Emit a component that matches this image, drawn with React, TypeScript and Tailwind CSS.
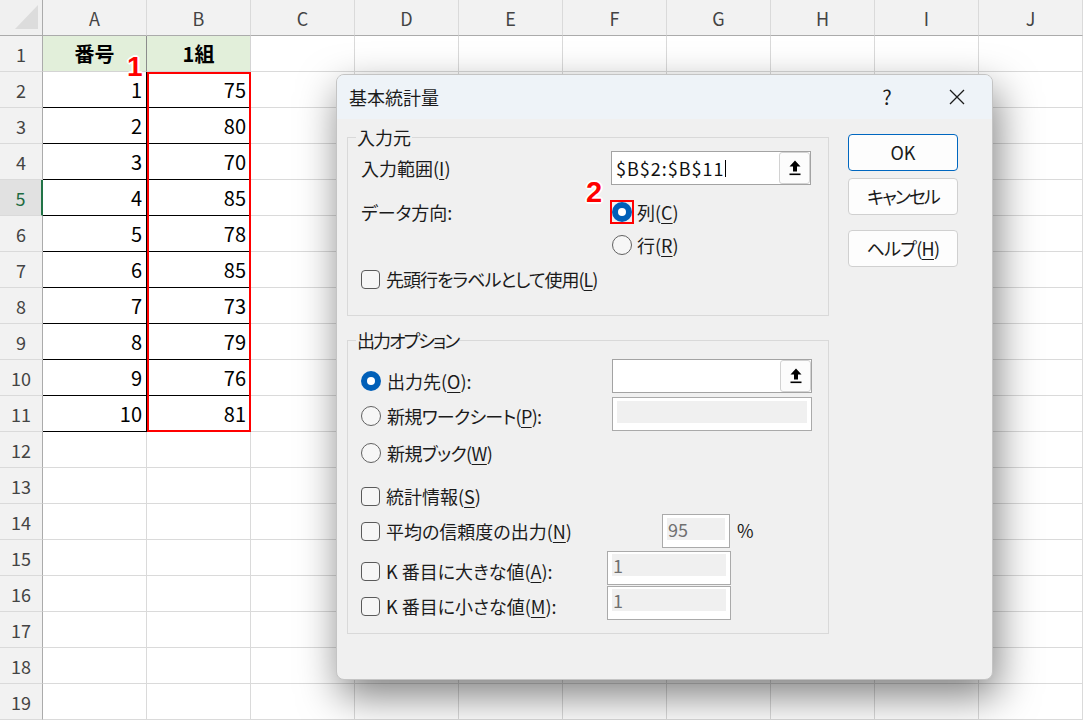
import React from "react";

const COLS = ["A", "B", "C", "D", "E", "F", "G", "H", "I", "J"];
const SCORES = [75, 80, 70, 85, 78, 85, 73, 79, 76, 81];
const ROWS = Array.from({ length: 19 }, (_, i) => i + 1);

function Acc({ pre, k, post }: { pre: string; k: string; post?: string }) {
  return (
    <span>
      {pre}(<span className="underline underline-offset-[3px] decoration-1">{k}</span>){post}
    </span>
  );
}

function UpArrow() {
  return (
    <svg width="12" height="16" viewBox="0 0 12 16">
      <path d="M6 0.5 L11.5 6.5 L8 6.5 L8 11.5 L4 11.5 L4 6.5 L0.5 6.5 Z" fill="#000" />
      <rect x="0.5" y="13.5" width="11" height="1.6" fill="#000" />
    </svg>
  );
}

function RefBox({ value, caret }: { value?: string; caret?: boolean }) {
  return (
    <div className="w-[200px] h-[34px] border border-[#a3a3a3] bg-white flex shrink-0">
      <div className="flex-1 flex items-center pl-[4px] text-[18px] tracking-[1px] text-[#111] leading-none">
        {value}
        {caret && <span className="w-px h-[17px] bg-black ml-[0px]" />}
      </div>
      <div className="w-[31px] h-[32px] border border-[#d2d2d2] rounded-[3px] bg-[#fcfcfc] flex items-center justify-center">
        <UpArrow />
      </div>
    </div>
  );
}

function GreyBox({ width, value, top }: { width: string; value?: string; top: string }) {
  return (
    <div className={`${width} h-[34px] border border-[#aaaaaa] bg-white px-[4px] shrink-0`}>
      <div className={`${top} h-[22px] bg-[#f0f0f0] flex items-center pl-[1px] text-[18px] text-[#707070] leading-none`}>
        {value}
      </div>
    </div>
  );
}

function Radio({ checked, marked }: { checked?: boolean; marked?: boolean }) {
  return (
    <span className="relative w-[20px] h-[20px] shrink-0">
      {checked ? (
        <span className="w-[20px] h-[20px] rounded-full bg-[#005fb8] flex items-center justify-center">
          <span className="w-[8px] h-[8px] rounded-full bg-white" />
        </span>
      ) : (
        <span className="block w-[20px] h-[20px] rounded-full border border-[#616161] bg-[#f6f6f6]" />
      )}
      {marked && <span className="absolute -inset-[2px] border-2 border-[#ff0000]" />}
    </span>
  );
}

function Check() {
  return <span className="w-[19px] h-[19px] rounded-[4px] border border-[#5a5a5a] bg-[#f6f6f6] shrink-0" />;
}

function StatsDialog() {
  return (
    <div className="absolute left-[336px] top-[74px] w-[657px] h-[606px] rounded-[8px] border border-[#c4c4c4] bg-[#f0f0f0] overflow-hidden shadow-[4px_16px_40px_rgba(0,0,0,0.5)] text-[18px] text-[#1b1b1b] [font-feature-settings:'palt'] font-['Noto_Sans_CJK_JP','Noto_Sans',sans-serif]">
      {/* title bar */}
      <div className="h-[44px] bg-[#eef3f8] flex items-center pl-[12px]">
        <span className="flex-1 leading-none">基本統計量</span>
        <span className="w-[46px] flex justify-center text-[20px] leading-none">?</span>
        <span className="w-[46px] ml-[24px] mr-[12px] flex justify-center">
          <svg width="16" height="16" viewBox="0 0 16 16">
            <path d="M1 1 L15 15 M15 1 L1 15" stroke="#1b1b1b" strokeWidth="1.3" />
          </svg>
        </span>
      </div>

      {/* body */}
      <div className="flex pl-[10px]">
        <div className="w-[482px] flex flex-col pt-[8px]">
          <fieldset className="border border-[#d9d9d9] w-[482px]">
            <legend className="ml-[8px] px-[1px] leading-[20px]">入力元</legend>
            <div className="pl-[13px] pt-[4px] pb-[21px]">
              <div className="flex items-center h-[34px]">
                <div className="w-[250px] leading-none">
                  <Acc pre="入力範囲" k="I" />
                </div>
                <RefBox value="$B$2:$B$11" caret />
              </div>
              <div className="flex mt-[12px]">
                <div className="w-[251px] h-[30px] flex items-center leading-none">データ方向:</div>
                <div className="flex flex-col gap-[3px]">
                  <div className="h-[30px] flex items-center gap-[5px] leading-none">
                    <Radio checked marked />
                    <Acc pre="列" k="C" />
                  </div>
                  <div className="h-[30px] flex items-center gap-[5px] leading-none">
                    <Radio />
                    <Acc pre="行" k="R" />
                  </div>
                </div>
              </div>
              <div className="mt-[4px] h-[30px] flex items-center gap-[6px] leading-none tracking-[-1px]">
                <Check />
                <Acc pre="先頭行をラベルとして使用" k="L" />
              </div>
            </div>
          </fieldset>

          <fieldset className="border border-[#d9d9d9] w-[482px] mt-[14px]">
            <legend className="ml-[8px] px-[1px] leading-[20px] tracking-[-2px]">出力オプション</legend>
            <div className="pl-[13px] pt-[9px] pb-[12px]">
              <div className="flex items-start">
                <div className="w-[251px] h-[30px] mt-[7px] flex items-center gap-[6px] leading-none">
                  <Radio checked />
                  <Acc pre="出力先" k="O" post=":" />
                </div>
                <RefBox />
              </div>
              <div className="flex items-start mt-[1px]">
                <div className="w-[251px] h-[30px] mt-[4px] flex items-center gap-[6px] leading-none tracking-[-0.7px]">
                  <Radio />
                  <Acc pre="新規ワークシート" k="P" post=":" />
                </div>
                <GreyBox width="w-[200px]" top="mt-[3px]" />
              </div>
              <div className="mt-[7px] h-[30px] flex items-center gap-[6px] leading-none tracking-[-0.6px]">
                <Radio />
                <Acc pre="新規ブック" k="W" />
              </div>
              <div className="mt-[13px] h-[30px] flex items-center gap-[6px] leading-none">
                <Check />
                <Acc pre="統計情報" k="S" />
              </div>
              <div className="flex items-start mt-[3px]">
                <div className="w-[301px] h-[30px] mt-[2px] flex items-center gap-[6px] leading-none">
                  <Check />
                  <Acc pre="平均の信頼度の出力" k="N" />
                </div>
                <GreyBox width="w-[68px]" top="mt-[3px]" value="95" />
                <div className="ml-[7px] h-[32px] flex items-center leading-none">%</div>
              </div>
              <div className="flex items-start mt-[3px]">
                <div className="w-[246px] h-[30px] mt-[5px] flex items-center gap-[6px] leading-none">
                  <Check />
                  <Acc pre="K 番目に大きな値" k="A" post=":" />
                </div>
                <GreyBox width="w-[124px]" top="mt-[2px]" value="1" />
              </div>
              <div className="flex items-start">
                <div className="w-[246px] h-[30px] mt-[5px] flex items-center gap-[6px] leading-none">
                  <Check />
                  <Acc pre="K 番目に小さな値" k="M" post=":" />
                </div>
                <GreyBox width="w-[124px]" top="mt-[2px]" value="1" />
              </div>
            </div>
          </fieldset>
        </div>

        <div className="flex flex-col pt-[15px] ml-[19px]">
          <button className="w-[110px] h-[37px] rounded-[4px] border border-[#0067c0] bg-[#fdfdfd] leading-none pb-[2px]">OK</button>
          <button className="w-[110px] h-[37px] mt-[7px] rounded-[4px] border border-[#d0d0d0] bg-[#fdfdfd] leading-none pb-[2px] tracking-[-2px]">
            キャンセル
          </button>
          <button className="w-[110px] h-[37px] mt-[15px] rounded-[4px] border border-[#d0d0d0] bg-[#fdfdfd] leading-none pb-[2px] tracking-[-0.7px]">
            <Acc pre="ヘルプ" k="H" />
          </button>
        </div>
      </div>
    </div>
  );
}

function Sheet() {
  return (
    <div className="grid grid-cols-[43px_repeat(10,104px)] grid-rows-[36px_repeat(19,36px)] w-[1083px] h-[720px] bg-white text-black font-['Noto_Sans_CJK_JP','Noto_Sans',sans-serif]">
      <div className="bg-[#f0f0f0] border-r border-b border-[#ababab] relative">
        <svg className="absolute inset-0" width="42" height="35" viewBox="0 0 42 35">
          <polygon points="38,5 38,29 15,29" fill="#dcdcdc" />
        </svg>
      </div>
      {COLS.map((c) => (
        <div
          key={c}
          className="bg-[#f2f2f2] border-r border-r-[#dadada] border-b border-b-[#ababab] flex items-center justify-center text-[18px] leading-none text-[#444]"
        >
          {c}
        </div>
      ))}
      {ROWS.map((r) => (
        <React.Fragment key={r}>
          {r === 5 ? (
            <div className="bg-[#e1e1e1] border-r-2 border-r-[#217346] border-b border-b-[#dadada] flex items-center justify-center text-[18px] leading-none text-[#1e6b42]">
              {r}
            </div>
          ) : (
            <div className="bg-[#f2f2f2] border-r border-r-[#ababab] border-b border-b-[#dadada] flex items-center justify-center text-[18px] leading-none text-[#444]">
              {r}
            </div>
          )}
          {COLS.map((c, ci) => {
            if (r === 1 && ci === 0)
              return (
                <div key={c} className="bg-[#e2efda] border-r border-r-[#8c8c8c] border-b border-b-[#d4d4d4] flex items-center justify-center text-[20px] leading-none font-bold">
                  番号
                </div>
              );
            if (r === 1 && ci === 1)
              return (
                <div key={c} className="bg-[#e2efda] border-r border-r-[#d4d4d4] border-b border-b-[#d4d4d4] flex items-center justify-center text-[20px] leading-none font-bold">
                  1組
                </div>
              );
            if (r >= 2 && r <= 11 && ci <= 1)
              return (
                <div key={c} className="border-r border-r-black border-b border-b-black flex items-center justify-end pr-[4px] text-[20px] leading-none">
                  {ci === 0 ? r - 1 : SCORES[r - 2]}
                </div>
              );
            return <div key={c} className="border-r border-b border-[#dadada]" />;
          })}
        </React.Fragment>
      ))}
    </div>
  );
}

export default function App() {
  return (
    <div className="relative w-[1083px] h-[720px] overflow-hidden bg-white">
      <Sheet />
      {/* selected range B2:B11 */}
      <div className="absolute left-[147px] top-[72px] w-[104px] h-[360px] border-2 border-[#ff0000]" />
      <span className="absolute left-[127px] top-[58px] text-[28px] leading-[18px] font-bold text-[#ff0000] font-['Liberation_Sans',sans-serif] [text-shadow:0_0_2px_#fff,1px_1px_0_#fff,-1px_-1px_0_#fff,1px_-1px_0_#fff,-1px_1px_0_#fff,2px_0_0_#fff,-2px_0_0_#fff,0_2px_0_#fff,0_-2px_0_#fff]">
        1
      </span>
      <StatsDialog />
      <span className="absolute left-[586px] top-[181px] text-[29px] leading-[22px] font-bold text-[#ff0000] font-['Liberation_Sans',sans-serif] [text-shadow:0_0_2px_#fff,1px_1px_0_#fff,-1px_-1px_0_#fff,1px_-1px_0_#fff,-1px_1px_0_#fff,2px_0_0_#fff,-2px_0_0_#fff,0_2px_0_#fff,0_-2px_0_#fff]">
        2
      </span>
    </div>
  );
}
